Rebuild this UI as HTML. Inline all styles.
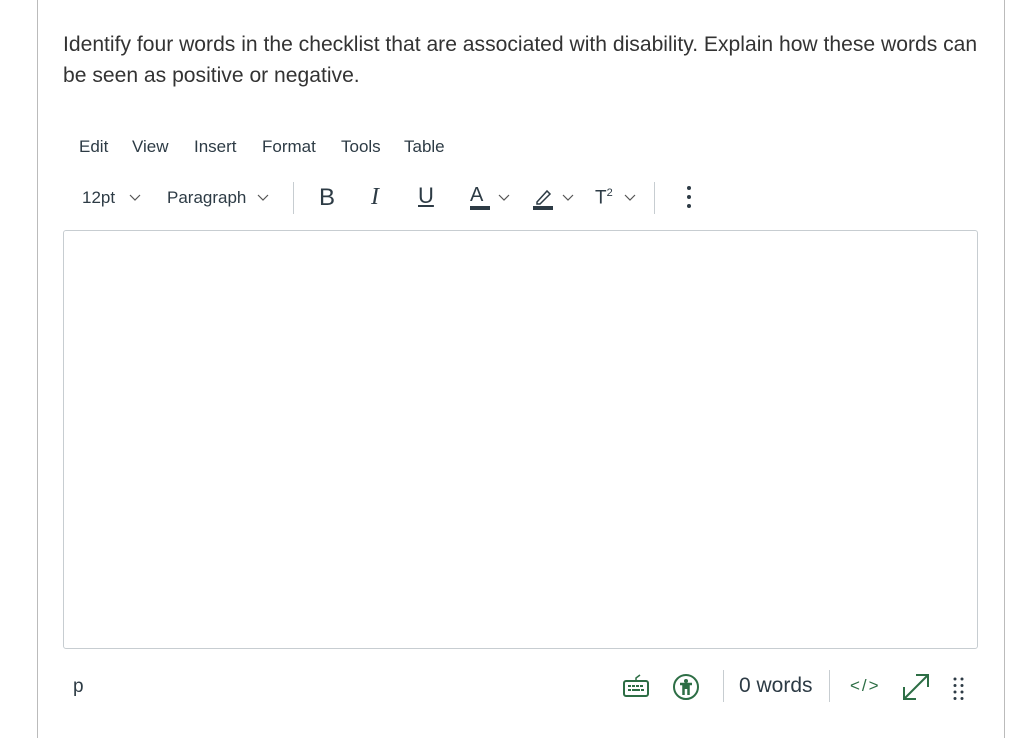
<!DOCTYPE html>
<html><head><meta charset="utf-8"><style>
body{margin:0;width:1024px;height:738px;background:#fff;position:relative;overflow:hidden;font-family:"Liberation Sans",sans-serif;color:#2d3b45}
.a{position:absolute}
.vl{position:absolute;background:#c7cdd1}
.m{position:absolute;top:137px;font-size:17px}
</style></head><body>
<div class="vl" style="left:37px;top:0;width:1px;height:738px;background:#bbb"></div>
<div class="vl" style="left:1004px;top:0;width:1px;height:738px;background:#bbb"></div>
<div class="a" style="left:63px;top:29px;font-size:21.1px;line-height:31px;white-space:nowrap;color:#333">Identify four words in the checklist that are associated with disability. Explain how these words can<br>be seen as positive or negative.</div>
<div class="m" style="left:79px">Edit</div>
<div class="m" style="left:132px">View</div>
<div class="m" style="left:194px">Insert</div>
<div class="m" style="left:262px">Format</div>
<div class="m" style="left:341px">Tools</div>
<div class="m" style="left:404px">Table</div>
<svg width="0" height="0" style="position:absolute"><defs><path id="ch" d="M1 1 L6 6 L11 1" fill="none" stroke="#555" stroke-width="1.2"/></defs></svg>
<div class="a" style="left:82px;top:188px;font-size:17px">12pt</div>
<svg class="a" style="left:129px;top:194px" width="12" height="8"><use href="#ch"/></svg>
<div class="a" style="left:167px;top:188px;font-size:17px">Paragraph</div>
<svg class="a" style="left:257px;top:194px" width="12" height="8"><use href="#ch"/></svg>
<div class="vl" style="left:293px;top:182px;width:1px;height:32px"></div>
<div class="a" style="left:319px;top:184px;font-size:24px">B</div>
<div class="a" style="left:371px;top:184px;font-size:24px;font-style:italic;font-family:'Liberation Serif',serif">I</div>
<div class="a" style="left:418px;top:183px;font-size:22px;text-decoration:underline">U</div>
<div class="a" style="left:470px;top:184px;font-size:20px">A</div>
<div class="a" style="left:470px;top:206px;width:20px;height:4px;background:#2d3b45"></div>
<svg class="a" style="left:498px;top:194px" width="12" height="8"><use href="#ch"/></svg>
<svg class="a" style="left:533px;top:187px" width="22" height="24" viewBox="0 0 22 24"><path d="M4 15 L14 4 L17 7 L7 17 L4 17 Z" fill="none" stroke="#2d3b45" stroke-width="1.5"/><rect x="0" y="19" width="20" height="4" fill="#2d3b45"/></svg>
<svg class="a" style="left:562px;top:194px" width="12" height="8"><use href="#ch"/></svg>
<div class="a" style="left:595px;top:187px;font-size:19px">T<sup style="font-size:11px">2</sup></div>
<svg class="a" style="left:624px;top:194px" width="12" height="8"><use href="#ch"/></svg>
<div class="vl" style="left:654px;top:182px;width:1px;height:32px"></div>
<div class="a" style="left:687px;top:186px;width:4px;height:26px"><div style="width:4px;height:4px;border-radius:2px;background:#2d3b45;margin-bottom:5px"></div><div style="width:4px;height:4px;border-radius:2px;background:#2d3b45;margin-bottom:5px"></div><div style="width:4px;height:4px;border-radius:2px;background:#2d3b45"></div></div>
<div class="a" style="left:63px;top:230px;width:913px;height:417px;border:1px solid #c7cdd1;border-radius:3px"></div>
<div class="a" style="left:73px;top:676px;font-size:19px">p</div>
<svg class="a" style="left:622px;top:672px" width="28" height="28" viewBox="0 0 28 28"><rect x="2" y="9" width="24" height="15" rx="2" fill="none" stroke="#2d6e45" stroke-width="2"/><path d="M14 9 V6 L18 3" stroke="#2d6e45" stroke-width="1.5" fill="none"/><g fill="#2d6e45"><rect x="6" y="13" width="3" height="2"/><rect x="10" y="13" width="3" height="2"/><rect x="14" y="13" width="3" height="2"/><rect x="18" y="13" width="3" height="2"/><rect x="6" y="17" width="3" height="2"/><rect x="10" y="17" width="8" height="2"/><rect x="19" y="17" width="3" height="2"/></g></svg>
<svg class="a" style="left:672px;top:673px" width="28" height="28" viewBox="0 0 28 28"><circle cx="14" cy="14" r="12" fill="none" stroke="#2d6e45" stroke-width="2"/><circle cx="14" cy="8" r="2" fill="#2d6e45"/><path d="M8 11 H20 M14 11 V16 M11.5 11 V22 M16.5 11 V22" stroke="#2d6e45" stroke-width="2.5" fill="none"/></svg>
<div class="vl" style="left:723px;top:670px;width:1px;height:32px"></div>
<div class="a" style="left:739px;top:674px;font-size:21px;color:#2d3b45">0 words</div>
<div class="vl" style="left:829px;top:670px;width:1px;height:32px"></div>
<div class="a" style="left:850px;top:676px;font-size:17px;color:#2d6e45;letter-spacing:2px">&lt;/&gt;</div>
<svg class="a" style="left:901px;top:672px" width="30" height="30" viewBox="0 0 30 30"><path d="M3 27 L27 3 M15 3 H27 V15 M3 15 V27 H15" stroke="#2d6e45" stroke-width="2" fill="none"/></svg>
<svg class="a" style="left:952px;top:677px" width="14" height="24" viewBox="0 0 14 24" fill="#2d3b45"><circle cx="3" cy="2" r="1.5"/><circle cx="10" cy="2" r="1.5"/><circle cx="3" cy="8.5" r="1.5"/><circle cx="10" cy="8.5" r="1.5"/><circle cx="3" cy="15" r="1.5"/><circle cx="10" cy="15" r="1.5"/><circle cx="3" cy="21.5" r="1.5"/><circle cx="10" cy="21.5" r="1.5"/></svg>
</body></html>
